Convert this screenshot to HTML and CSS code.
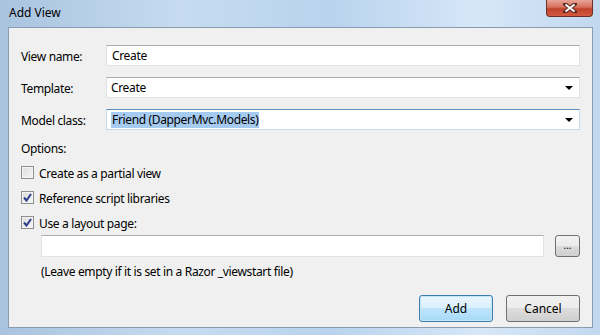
FILE: index.html
```html
<!DOCTYPE html>
<html lang="en">
<head>
    <meta charset="UTF-8">
    <title>Add View</title>
    <link rel="stylesheet" href="styles.css">
</head>
<body>
    <div class="window">
        <div class="titlebar">
            <span class="title">Add View</span>
            <div class="close-btn">
                <svg width="14" height="10" viewBox="0 0 14 10">
                    <path d="M2 1 L12 9 M12 1 L2 9" stroke="#5a2a22" stroke-width="4" stroke-linecap="square"/>
                    <path d="M2.5 1.5 L11.5 8.5 M11.5 1.5 L2.5 8.5" stroke="#ffffff" stroke-width="2"/>
                </svg>
            </div>
        </div>

        <div class="panel">
            <div class="fields">
                <label>View name:</label>
                <div class="textbox">Create</div>

                <label>Template:</label>
                <div class="textbox combo">
                    <span>Create</span>
                    <span class="arrow"></span>
                </div>

                <label>Model class:</label>
                <div class="textbox combo focused">
                    <span class="selected">Friend (DapperMvc.Models)</span>
                    <span class="arrow"></span>
                </div>
            </div>

            <div class="options-label">Options:</div>
            <div class="checks">
                <div class="check-row">
                    <span class="checkbox"></span>
                    <span>Create as a partial view</span>
                </div>
                <div class="check-row">
                    <span class="checkbox checked">
                        <svg width="9" height="9" viewBox="0 0 9 9"><path d="M1 4.5 L3.5 7.5 L8 1" fill="none" stroke="#2b3d8a" stroke-width="2"/></svg>
                    </span>
                    <span>Reference script libraries</span>
                </div>
                <div class="check-row">
                    <span class="checkbox checked">
                        <svg width="9" height="9" viewBox="0 0 9 9"><path d="M1 4.5 L3.5 7.5 L8 1" fill="none" stroke="#2b3d8a" stroke-width="2"/></svg>
                    </span>
                    <span>Use a layout page:</span>
                </div>
            </div>

            <div class="layout-row">
                <div class="textbox layout-box"></div>
                <button class="browse">...</button>
            </div>
            <div class="hint">(Leave empty if it is set in a Razor _viewstart file)</div>

            <div class="actions">
                <button class="btn default">Add</button>
                <button class="btn">Cancel</button>
            </div>
        </div>
    </div>
</body>
</html>
```

FILE: styles.css
```css
body {
    margin: 0;
    font-family: "Noto Sans", "Liberation Sans", sans-serif;
    font-size: 12px;
    letter-spacing: -0.35px;
    color: #000;
}
.window {
    width: 600px;
    height: 335px;
    box-sizing: border-box;
    background: linear-gradient(90deg, #a9c3df 0%, #c6dbf0 30%, #b9d3ee 55%, #d6e7f8 80%, #c2d8ef 100%);
    overflow: hidden;
}
.titlebar {
    height: 27px;
    display: flex;
    justify-content: space-between;
    align-items: flex-start;
}
.title {
    padding: 4px 0 0 9px;
    font-size: 12px;
    letter-spacing: 0;
}
.close-btn {
    width: 45px;
    height: 16px;
    margin-right: 7px;
    border: 1px solid #6e2f24;
    border-top: none;
    border-radius: 0 0 4px 4px;
    background: linear-gradient(180deg, #e9a597 0%, #d5705c 45%, #c0412b 55%, #d35a3f 100%);
    display: flex;
    justify-content: center;
    align-items: center;
}
.panel {
    margin: 0 7px 0 8px;
    height: 301px;
    box-sizing: border-box;
    background: #f0f0f0;
    border: 1px solid #8a9bb0;
    padding: 17px 12px 0 12px;
}
.fields {
    display: grid;
    grid-template-columns: 85px 1fr;
    row-gap: 11px;
    align-items: center;
}
.fields label {
    padding-top: 2px;
}
.textbox {
    height: 21px;
    box-sizing: border-box;
    background: #fff;
    border: 1px solid #e2e3ea;
    border-top-color: #abadb3;
    padding: 1px 5px 0 5px;
    display: flex;
    align-items: center;
    line-height: 16px;
}
.combo {
    justify-content: space-between;
    padding: 1px 3px 0 4px;
}
.focused {
    border-color: #c5daed;
    border-top-color: #5f8fbf;
}
.selected {
    background: #a6cbf0;
    padding: 0 1px;
}
.arrow {
    width: 0;
    height: 0;
    border-left: 4px solid transparent;
    border-right: 4px solid transparent;
    border-top: 4px solid #000;
    margin-right: 3px;
}
.options-label {
    margin-top: 11px;
    line-height: 16px;
}
.checks {
    margin-top: 3px;
}
.check-row {
    height: 25px;
    display: flex;
    align-items: center;
    gap: 5px;
}
.check-row span:last-child {
    padding-top: 1px;
}
.checkbox {
    width: 13px;
    height: 13px;
    box-sizing: border-box;
    border: 1px solid #8e8f8f;
    background: linear-gradient(135deg, #dcdcdc, #f6f6f6);
    box-shadow: inset 0 0 0 1px #f4f4f4;
    display: flex;
    align-items: center;
    justify-content: center;
}
.layout-row {
    display: flex;
    gap: 11px;
    margin-left: 20px;
}
.layout-box {
    flex: 1;
    height: 22px;
}
.browse {
    width: 25px;
    height: 22px;
    padding: 0 0 3px 0;
    font-family: inherit;
    font-size: 10px;
    border: 1px solid #707070;
    border-radius: 3px;
    background: linear-gradient(180deg, #f2f2f2 0%, #ebebeb 50%, #dddddd 50%, #cfcfcf 100%);
}
.hint {
    margin: 7px 0 0 20px;
    line-height: 16px;
}
.actions {
    display: flex;
    justify-content: flex-end;
    gap: 13px;
    margin-top: 15px;
}
.btn {
    width: 74px;
    height: 27px;
    font-family: inherit;
    font-size: 12px;
    letter-spacing: 0;
    border: 1px solid #707070;
    border-radius: 3px;
    background: linear-gradient(180deg, #f2f2f2 0%, #ebebeb 50%, #dddddd 50%, #cfcfcf 100%);
    padding: 0;
}
.btn.default {
    border-color: #3c7fb1;
    background: linear-gradient(180deg, #eaf6fd 0%, #d9f0fc 50%, #bee6fd 50%, #a7d9f5 100%);
    box-shadow: inset 0 0 0 1px #c4e5f6;
}
```
